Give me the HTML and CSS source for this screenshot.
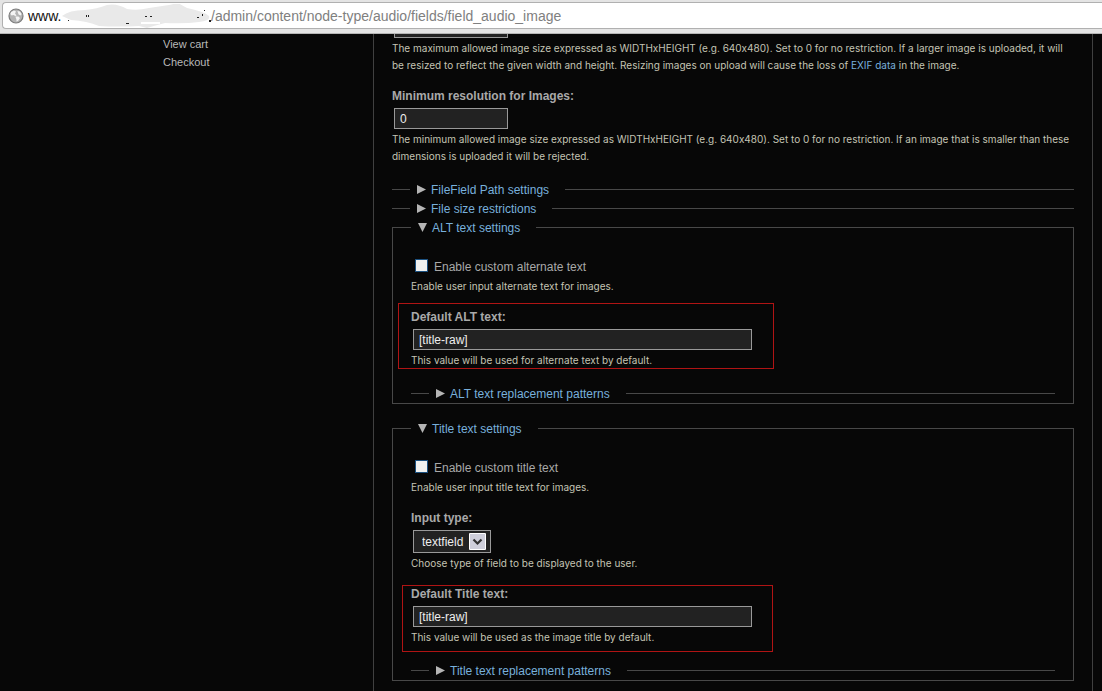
FILE: index.html
```
<!DOCTYPE html>
<html lang="en">
<head>
    <meta charset="utf-8">
    <title>Audio image field settings</title>
    <link rel="stylesheet" href="styles.css">
</head>
<body>
    <div class="browser-bar">
        <div class="address">
            <svg class="globe" width="16" height="16" viewBox="0 0 16 16">
                <circle cx="8" cy="8" r="7" fill="#b4b4b4" stroke="#7c7c7c" stroke-width="1.2"/>
                <path d="M3 4 L6 2.4 L8 3.6 L7 5.6 L8.6 7.4 L7.4 8 L5.4 7 L3.6 7.4 L2.4 6 Z" fill="#f4f4f4"/>
                <path d="M9.4 3 L12 3.6 L13.6 6 L12.6 7.6 L10.6 6.6 Z" fill="#f4f4f4"/>
                <path d="M7.4 8.6 L10.4 8.6 L12 10 L10.4 12.6 L8.6 13.8 L8.4 11.4 Z" fill="#f4f4f4"/>
            </svg>
            <label class="host" for="url">www.</label>
            <svg class="smudge" width="150" height="24" viewBox="0 0 150 24">
                <path d="M1 12 Q8 6 24 6 Q36 5 46 1 Q56 -1 66 5 Q76 7 88 4 L108 1 L117 -1 L126 4 Q142 7 148 12 Q150 17 138 18 Q124 20 104 19 Q92 22 86 24 L78 22 Q56 23 38 22 Q26 17 10 16 Z" fill="#e9e9e9"/>
                <path d="M80 18 H99 V20 H80 Z" fill="#fff"/>
                <path d="M7 16h1v1h-1z M25 11h1v2h-1z M27 11h1v2h-1z M65 19h3v1h-3z M84 12h2v1h-2z M89 12h2v1h-2z M136 13h2v1h-2z M141 10h1v2h-1z M143 6h1v1h-1z M148 16h2v2h-2z" fill="#222"/>
            </svg>
            <input class="url" id="url" type="text" value="/admin/content/node-type/audio/fields/field_audio_image">
        </div>
    </div>

    <div class="page">
        <div class="sidebar">
            <ul class="menu">
                <li><a href="#">View cart</a></li>
                <li><a href="#">Checkout</a></li>
            </ul>
        </div>

        <form class="content">
            <div class="form-item">
                <input class="form-text short" type="text" aria-label="Maximum resolution for Images">
                <div class="description">The maximum allowed image size expressed as WIDTHxHEIGHT (e.g. 640x480). Set to 0 for no restriction. If a larger image is uploaded, it will be resized to reflect the given width and height. Resizing images on upload will cause the loss of <a href="#">EXIF data</a> in the image.</div>
            </div>

            <div class="form-item">
                <label class="title" for="min-resolution">Minimum resolution for Images:</label>
                <input class="form-text short" id="min-resolution" type="text" value="0">
                <div class="description">The minimum allowed image size expressed as WIDTHxHEIGHT (e.g. 640x480). Set to 0 for no restriction. If an image that is smaller than these dimensions is uploaded it will be rejected.</div>
            </div>

            <fieldset class="collapsed">
                <legend><a href="#">FileField Path settings</a></legend>
            </fieldset>
            <fieldset class="collapsed">
                <legend><a href="#">File size restrictions</a></legend>
            </fieldset>

            <fieldset class="open">
                <legend><a href="#">ALT text settings</a></legend>
                <div class="form-item">
                    <label class="option"><input type="checkbox"> Enable custom alternate text</label>
                    <div class="description">Enable user input alternate text for images.</div>
                </div>
                <div class="form-item marked">
                    <label class="title" for="alt-text">Default ALT text:</label>
                    <input class="form-text" id="alt-text" type="text" value="[title-raw]">
                    <div class="description">This value will be used for alternate text by default.</div>
                </div>
                <fieldset class="collapsed">
                    <legend><a href="#">ALT text replacement patterns</a></legend>
                </fieldset>
            </fieldset>

            <fieldset class="open">
                <legend><a href="#">Title text settings</a></legend>
                <div class="form-item">
                    <label class="option"><input type="checkbox"> Enable custom title text</label>
                    <div class="description">Enable user input title text for images.</div>
                </div>
                <div class="form-item">
                    <label class="title" for="input-type">Input type:</label>
                    <div class="select-box">
                        <select id="input-type">
                            <option>textfield</option>
                            <option>textarea</option>
                        </select>
                        <svg class="select-arrow" width="17" height="17" viewBox="0 0 17 17">
                            <rect width="17" height="17" rx="1" fill="#fff"/>
                            <rect x="1" y="1" width="15" height="15" fill="#cfcfdb"/>
                            <path d="M4.5 6.5 L8.5 10.5 L12.5 6.5" fill="none" stroke="#333" stroke-width="2.2"/>
                        </svg>
                    </div>
                    <div class="description">Choose type of field to be displayed to the user.</div>
                </div>
                <div class="form-item marked marked-title">
                    <label class="title" for="title-text">Default Title text:</label>
                    <input class="form-text" id="title-text" type="text" value="[title-raw]">
                    <div class="description">This value will be used as the image title by default.</div>
                </div>
                <fieldset class="collapsed">
                    <legend><a href="#">Title text replacement patterns</a></legend>
                </fieldset>
            </fieldset>
        </form>
    </div>
</body>
</html>
```
FILE: styles.css
```
*, *::before, *::after {
    box-sizing: border-box;
}

body {
    margin: 0;
    height: 100vh;
    overflow: hidden;
    display: flex;
    flex-direction: column;
    background: #070707;
    color: #a9a9a9;
    font-family: "Liberation Sans", Arial, sans-serif;
    font-size: 12px;
    line-height: 18px;
}

a {
    color: #78b0dc;
    text-decoration: none;
}

/* Browser address bar */
.browser-bar {
    flex: none;
    height: 34px;
    padding: 2px 0 0 2px;
    background: #e4e4e4;
    border-bottom: 1px solid #b5b5b5;
    position: relative;
    z-index: 1;
}

.address {
    display: flex;
    align-items: center;
    height: 27px;
    padding-left: 5px;
    background: #fff;
    border: 1px solid #b0b0b0;
    border-right: 0;
    border-radius: 4px 0 0 4px;
    font-size: 14px;
}

.globe {
    flex: none;
}

.host {
    margin-left: 4px;
    width: 33px;
    color: #111;
}

.smudge {
    flex: none;
}

.url {
    flex: 1;
    padding: 0;
    border: 0;
    background: none;
    color: #808080;
    font: inherit;
    outline: none;
}

/* Page is scrolled a little under the bar */
.page {
    flex: 1;
    display: flex;
    margin-top: -17px;
    padding-right: 9px;
}

.sidebar {
    flex: none;
    width: 373px;
}

.menu {
    list-style: none;
    margin: 18px 0 0 163px;
    padding: 0;
    font-size: 11px;
}

.menu a {
    color: #b9b9b9;
}

.content {
    flex: 1;
    padding: 0 18px;
    border: solid #404040;
    border-width: 0 1px;
}

.form-item {
    margin-bottom: 13px;
}

.title {
    display: block;
    margin-bottom: 3px;
    font-weight: bold;
}

.description {
    margin-top: 2px;
    color: #c4c4b4;
    font-family: Inter, "Liberation Sans", sans-serif;
    font-size: 10px;
    font-variant-ligatures: no-contextual; /* keep the x in 640x480 */
    line-height: 17px;
}

.form-text {
    display: block;
    width: 339px;
    height: 21px;
    margin-left: 2px;
    padding: 0 5px;
    background: #222;
    border: 1px solid #999;
    color: #eee;
    font: inherit;
}

.short {
    width: 114px;
}

.option {
    display: flex;
    align-items: center;
    gap: 6px;
    padding-left: 4px;
}

.option input {
    appearance: none;
    width: 13px;
    height: 13px;
    margin: 0 0 3px;
    background: #f1f1ef;
    border: 1px solid #1c5180;
}

.select-box {
    display: flex;
    align-items: center;
    position: relative;
    width: 78px;
    height: 23px;
    margin-left: 2px;
}

.select-box select {
    appearance: none;
    width: 100%;
    height: 100%;
    padding: 0 8px;
    background: #222;
    border: 1px solid #999;
    color: #eee;
    font: inherit;
}

.select-arrow {
    position: absolute;
    right: 5px;
    pointer-events: none;
}

/* Collapsible groups */
fieldset {
    min-width: 0;
    margin: 0;
    padding: 0 18px;
    border: 1px solid #484848;
}

.collapsed {
    border-width: 1px 0 0;
}

.form-item + fieldset {
    margin-top: 15px;
}

.open + .open {
    margin-top: 15px;
}

.open > legend + .form-item {
    margin-top: 21px;
}

legend {
    display: flex;
    align-items: center;
    gap: 5px;
    height: 19px;
    padding: 0 16px 0 7px;
}

legend::before {
    content: "";
    width: 9px;
    height: 9px;
    background: #b5b5b5;
}

.collapsed > legend::before {
    clip-path: polygon(0 0, 100% 50%, 0 100%);
}

.open > legend::before {
    clip-path: polygon(0 0, 100% 0, 50% 100%);
}

/* Red marker frames */
.marked {
    position: relative;
}

.marked::after {
    content: "";
    position: absolute;
    top: -5px;
    bottom: 0;
    left: -13px;
    width: 376px;
    border: 1px solid #b01414;
    pointer-events: none;
}

.marked-title::after {
    top: 0;
    bottom: -6px;
    left: -9px;
    width: 371px;
}
```
